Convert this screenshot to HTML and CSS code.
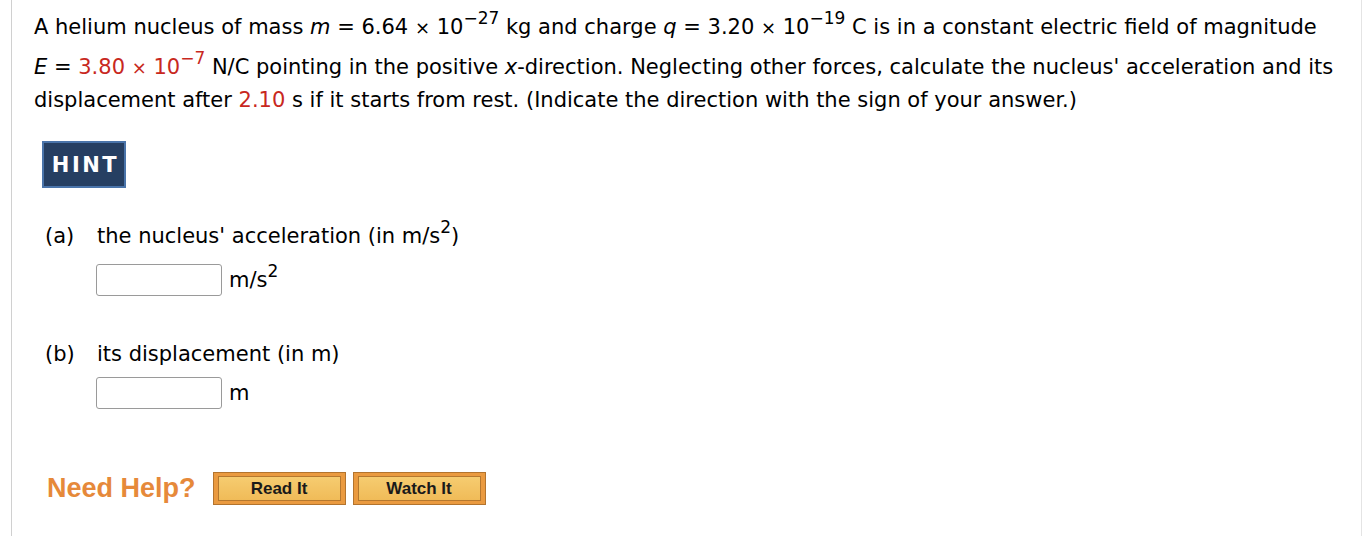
FILE: index.html
```html
<!DOCTYPE html>
<html>
<head>
<meta charset="utf-8">
<link rel="stylesheet" href="styles.css">
</head>
<body>
<div class="frame">
  <p class="question">A helium nucleus of mass <i>m</i> = 6.64 <span class="times">×</span> 10<sup>−27</sup> kg and charge <i>q</i> = 3.20 <span class="times">×</span> 10<sup>−19</sup> C is in a constant electric field of magnitude<br><i>E</i> = <span class="red">3.80 <span class="times">×</span> 10<sup>−7</sup></span> N/C pointing in the positive <i>x</i>-direction. Neglecting other forces, calculate the nucleus' acceleration and its<br>displacement after <span class="red">2.10</span> s if it starts from rest. (Indicate the direction with the sign of your answer.)</p>

  <div class="hint-row"><span class="hint">HINT</span></div>

  <div class="part part-a">
    <div class="part-label"><span class="letter">(a)</span><span>the nucleus' acceleration (in m/s<sup>2</sup>)</span></div>
    <div class="answer"><span class="box"></span><span class="unit">m/s<sup>2</sup></span></div>
  </div>

  <div class="part part-b">
    <div class="part-label"><span class="letter">(b)</span><span>its displacement (in m)</span></div>
    <div class="answer"><span class="box"></span><span class="unit">m</span></div>
  </div>

  <div class="help">
    <span class="need">Need Help?</span>
    <span class="btn"><span class="btn-in">Read It</span></span>
    <span class="btn"><span class="btn-in">Watch It</span></span>
  </div>
</div>
</body>
</html>
```

FILE: styles.css
```css
html, body {
  margin: 0;
  padding: 0;
  background: #fff;
}
body {
  font-family: "DejaVu Sans", Verdana, sans-serif;
  color: #000;
}
.frame {
  margin-left: 11px;
  width: 1351px;
  height: 536px;
  border-left: 1px solid #d0d0d0;
  border-right: 1px solid #e4e4e4;
  box-sizing: border-box;
  padding: 4px 0 0 22px;
}
.question {
  margin: 0;
  font-size: 21px;
  line-height: 32px;
  white-space: nowrap;
}
.question sup {
  font-size: 17px;
  line-height: 28px;
  vertical-align: 10px;
}
.times {
  font-size: 18px;
}
.red { color: #c8281e; }
.hint-row {
  margin-top: 25px;
  height: 47px;
  display: flex;
}
.hint {
  margin-left: 8px;
  display: flex;
  align-items: center;
  justify-content: center;
  width: 84px;
  height: 47px;
  box-sizing: border-box;
  padding-left: 3px;
  background: #263f62;
  border: 2px solid #4a74aa;
  color: #fff;
  font-family: "DejaVu Sans", Verdana, sans-serif;
  font-weight: bold;
  font-size: 21px;
  letter-spacing: 2.5px;
}
.part { font-size: 21px; }
.part sup {
  font-size: 17px;
  line-height: 0;
  vertical-align: 10px;
}
.part-a { margin-top: 34px; }
.part-b { margin-top: 44px; }
.part-label {
  display: flex;
  line-height: 28px;
  padding-left: 11px;
}
.letter { width: 52px; }
.answer {
  display: flex;
  align-items: center;
  padding-left: 62px;
}
.part-a .answer { margin-top: 14px; }
.part-b .answer { margin-top: 9px; }
.box {
  width: 126px;
  height: 32px;
  box-sizing: border-box;
  border: 1px solid #9a9a9a;
  border-radius: 3px;
  background: #fff;
}
.unit {
  margin-left: 7px;
  line-height: 28px;
}
.help {
  margin-top: 63px;
  display: flex;
  align-items: center;
  padding-left: 13px;
}
.need {
  font-family: "Liberation Sans", Arial, sans-serif;
  font-weight: bold;
  font-size: 27px;
  color: #e6893a;
  margin-right: 17px;
}
.btn {
  width: 133px;
  height: 33px;
  box-sizing: border-box;
  border: 1px solid #b3742e;
  background: #ea9a40;
  padding: 3px 4px;
  margin-right: 7px;
  display: flex;
}
.btn-in {
  flex: 1;
  display: flex;
  align-items: center;
  justify-content: center;
  background: linear-gradient(#f6cc70, #f0bb58);
  border: 1px solid #b5782f;
  font-family: "Liberation Sans", Arial, sans-serif;
  font-weight: bold;
  font-size: 17px;
  color: #1a1a1a;
}
```
